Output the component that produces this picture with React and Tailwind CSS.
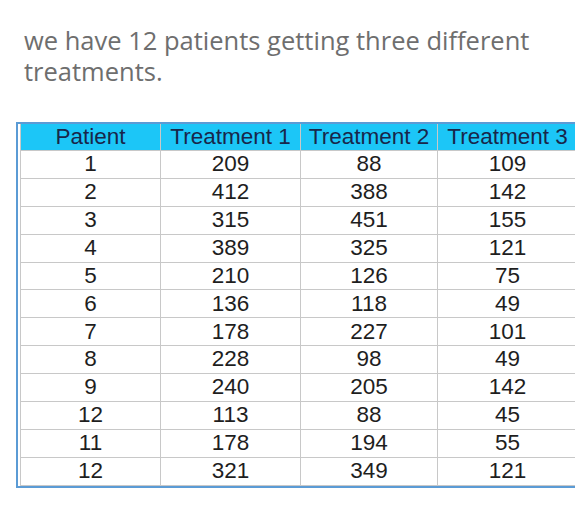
const rows = [
  [1, 209, 88, 109],
  [2, 412, 388, 142],
  [3, 315, 451, 155],
  [4, 389, 325, 121],
  [5, 210, 126, 75],
  [6, 136, 118, 49],
  [7, 178, 227, 101],
  [8, 228, 98, 49],
  [9, 240, 205, 142],
  [12, 113, 88, 45],
  [11, 178, 194, 55],
  [12, 321, 349, 121],
]

const headers = ["Patient", "Treatment 1", "Treatment 2", "Treatment 3"]

function App() {
  return (
    <div className="w-[575px] h-[508px] overflow-hidden bg-white">
      <p className="pt-[25px] pl-[24px] pr-4 text-[25.5px] leading-[31px] text-[#6e6e6e] font-['Open_Sans',sans-serif]">
        we have 12 patients getting three different treatments.
      </p>

      <div className="mt-[35px] ml-[16px] w-[580px] border-2 border-[#5b9bd5] border-r-0 pl-[2px] font-['Liberation_Sans',Arial,sans-serif] text-[22.5px] leading-none">
        <div className="grid grid-cols-[140px_140px_137px_140px] border-l border-[#c8c8c8]">
          {headers.map((h) => (
            <div
              key={h}
              className="h-[27px] flex items-center justify-center bg-[#1cc6f7] text-[#18264a] border-r border-b border-[#c8c8c8]"
            >
              {h}
            </div>
          ))}
          {rows.map((r, i) =>
            r.map((v, j) => (
              <div
                key={i + "-" + j}
                className="h-[27.9px] flex items-center justify-center text-[#1e1e1e] border-r border-b border-[#c8c8c8]"
              >
                {v}
              </div>
            ))
          )}
        </div>
      </div>
    </div>
  )
}

export default App
